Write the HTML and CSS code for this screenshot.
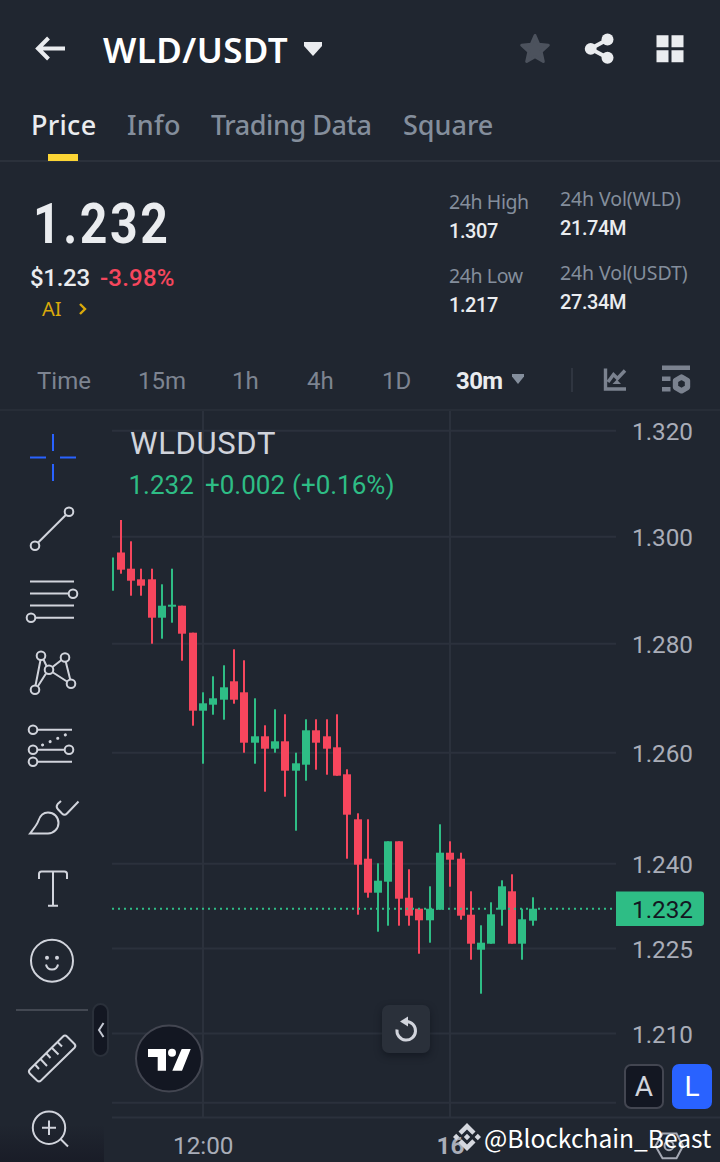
FILE: index.html
```html
<!DOCTYPE html>
<html lang="en">
<head>
  <meta charset="UTF-8">
  <meta name="viewport" content="width=device-width, initial-scale=1.0">
  <title>WLD/USDT</title>
  <link rel="stylesheet" href="styles.css">
</head>
<body>
  <header class="header">
    <svg class="back" width="32" height="26" viewBox="34 36 32 26">
      <path d="M65 48.500H38M48.500 38L38 48.500L48.500 59" fill="none" stroke="#eaecef" stroke-width="4"/>
    </svg>
    <h1 class="pair">WLD/USDT</h1>
    <svg class="caret" width="18" height="14" viewBox="0 0 18 14"><path d="M0 0H18V4L9 14L0 4Z" fill="#eaecef"/></svg>
    <div class="actions">
      <svg width="32" height="32" viewBox="519 33 32 32">
        <path d="M535 35.500L538.800 44.300L548.300 45.200L541.200 51.700L543.300 61.500L535 56.800L526.700 61.500L528.800 51.700L521.700 45.200L531.200 44.300Z" fill="#4c525d" stroke="#4c525d" stroke-width="3" stroke-linejoin="round"/>
      </svg>
      <svg width="32" height="32" viewBox="584 33 32 32">
        <path d="M607.500 39.500L590.500 48.800L607.500 57.800" fill="none" stroke="#eaecef" stroke-width="4"/>
        <circle cx="590.700" cy="48.800" r="5.900" fill="#eaecef"/>
        <circle cx="607.500" cy="39.500" r="6" fill="#eaecef"/>
        <circle cx="607.500" cy="57.800" r="6" fill="#eaecef"/>
      </svg>
      <svg width="32" height="32" viewBox="654 33 32 32">
        <path d="M656.500 35.300h12v12h-12zM671.500 35.300h12v12h-12zM656.500 50.300h12v12h-12zM671.500 50.300h12v12h-12z" fill="#eaecef"/>
      </svg>
    </div>
  </header>

  <nav class="tabs">
    <a class="tab tab-price active">Price</a>
    <a class="tab tab-info">Info</a>
    <a class="tab tab-data">Trading Data</a>
    <a class="tab tab-square">Square</a>
  </nav>

  <section class="ticker">
    <div class="quote">
      <div class="last">1.232</div>
      <div class="change"><span class="usd">$1.23</span><span class="percent">-3.98%</span></div>
      <div class="tag">
        <span>AI</span>
        <svg width="8" height="12" viewBox="0 0 8 12"><path d="M1 1L6 6L1 11" fill="none" stroke="#d9a90b" stroke-width="2.400"/></svg>
      </div>
    </div>
    <div class="stats stats-price">
      <div class="stat"><span class="label">24h High</span><span class="value">1.307</span></div>
      <div class="stat"><span class="label">24h Low</span><span class="value">1.217</span></div>
    </div>
    <div class="stats stats-volume">
      <div class="stat"><span class="label">24h Vol(WLD)</span><span class="value">21.74M</span></div>
      <div class="stat"><span class="label">24h Vol(USDT)</span><span class="value">27.34M</span></div>
    </div>
  </section>

  <div class="intervals">
    <span class="interval wide">Time</span>
    <span class="interval mid">15m</span>
    <span class="interval">1h</span>
    <span class="interval">4h</span>
    <span class="interval day-one">1D</span>
    <span class="interval selected">30m</span>
    <svg class="down" width="12" height="10" viewBox="0 0 12 10"><path d="M0 0H12V2.500L6 10L0 2.500Z" fill="#848e9c"/></svg>
    <i class="divider"></i>
    <svg class="line-icon" width="24" height="24" viewBox="603 367 24 24">
      <path d="M605.500 367.500V388H626M608 381L613.500 373.500L617.500 377.500L625 369.500" fill="none" stroke="#7b828f" stroke-width="3.400"/>
      <path d="M612.500 383H621L616.800 378.500Z" fill="#7b828f"/>
    </svg>
    <svg width="30" height="30" viewBox="661 365 30 30">
      <path d="M662 365.500h28v4.500h-28zM662 376.500h8.500v4.500H662zM662 387h8.500v4.500H662z" fill="#7b828f"/>
      <path d="M681.500 377L687.500 380.500V387.300L681.500 390.800L675.500 387.300V380.500Z" fill="none" stroke="#7b828f" stroke-width="5.400" stroke-linejoin="round"/>
    </svg>
  </div>

  <main class="workspace">
    <aside class="toolbar">
      <svg class="tool" viewBox="0 422 104 72"><path d="M53 434V451M53 464V481M30 457.500H46M60 457.500H76" stroke="#2962ff"/></svg>
      <svg class="tool" viewBox="0 494 104 72"><path d="M38.200 542.500L65.800 515"/><circle cx="35" cy="545.700" r="4.300"/><circle cx="69" cy="511.700" r="4.300"/></svg>
      <svg class="tool" viewBox="0 566 104 72"><path d="M30 581.500H74M30 593.500H68.500M30 605.500H74M35.500 617.700H74"/><circle cx="73" cy="593.700" r="4.300"/><circle cx="31" cy="617.700" r="4.300"/></svg>
      <svg class="tool" viewBox="0 638 104 72">
        <path d="M40.500 660L35.500 685.500M43.500 659.500L46.500 666M46 673.500L38 686M52.500 667L61.500 660M53 672.500L67 681.500M65.700 661.500L70.200 679.500"/>
        <circle cx="41" cy="655.700" r="4.300"/><circle cx="65" cy="657.500" r="4.300"/><circle cx="49" cy="669.700" r="4.300"/><circle cx="35" cy="689.700" r="4.300"/><circle cx="71" cy="683.700" r="4.300"/>
      </svg>
      <svg class="tool" viewBox="0 710 104 72">
        <path d="M37.500 729.700H72M37.500 749.700H64.500M37.500 761.700H72"/>
        <path d="M42.500 745L67.500 734" stroke-width="3" stroke-dasharray="0.100 8.200" stroke-linecap="round"/>
        <circle cx="33" cy="729.700" r="4.300"/><circle cx="33" cy="749.700" r="4.300"/><circle cx="69" cy="749.700" r="4.300"/><circle cx="33" cy="761.700" r="4.300"/>
      </svg>
      <svg class="tool" viewBox="0 782 104 72">
        <path d="M30 833.500H48C54 833.500 58.500 828.500 58.500 823C58.500 817 54 812.500 48 812.500C43.500 812.500 40 816 38.500 820.500C37 825 33 829.500 30 833.500Z"/>
        <path d="M61 801L57.700 804C56.500 805.500 56.500 807.500 57.700 809L62 813.500C63.500 815 65.500 815 67 813.500L78.500 801.500"/>
      </svg>
      <svg class="tool" viewBox="0 854 104 72"><path d="M39 879V874Q39 871.500 41.500 871.500H64.500Q67 871.500 67 874V879M53 872V905M48 905.700H58"/></svg>
      <svg class="tool" viewBox="0 926 104 72">
        <circle cx="52" cy="960.700" r="21"/><path d="M46 964.500Q47 969.500 52 969.500Q57 969.500 58 964.500"/>
        <circle class="dot" cx="47" cy="957.700" r="2"/><circle class="dot" cx="57" cy="957.700" r="2"/>
      </svg>
      <hr class="split">
      <svg class="tool" viewBox="0 1023 104 72">
        <path d="M63 1036.500Q65 1034.500 67 1036.500L74.500 1044Q76.200 1046 74.500 1047.800L41 1080.500Q39 1082.300 37 1080.500L29.800 1073.500Q28 1071.500 29.800 1069.500Z"/>
        <path d="M35 1064.500L39 1069M40.500 1059L47 1066M46.500 1053.500L50.500 1058M52 1048L58.500 1054.500M57.500 1042L62 1046.500"/>
      </svg>
      <svg class="tool tool-last" viewBox="0 1095 104 67"><circle cx="49" cy="1127.700" r="16.200"/><path d="M49 1120.500V1135M42 1127.700H56M60.500 1139L68 1146.500"/></svg>
      <button class="collapse"><svg width="8" height="16" viewBox="0 0 8 16"><path d="M6.500 1L2 8L6.500 15" fill="none" stroke="#c5c9d3" stroke-width="2"/></svg></button>
    </aside>

    <section class="chart">
      <svg class="plot" viewBox="104 411 616 751">
        <g class="grid">
          <path d="M112 430.700H616M112 536.700H616M112 643.700H616M112 752.700H616M112 863.700H616M112 948.600H616M112 1033.600H616M112 1102.700H616M112 1117.600H720"/>
          <path d="M203 411V1117M450 411V1117"/>
        </g>
        <g id="candles"></g>
        <path class="last-line" d="M112 908.700H616"/>
        <text class="symbol" x="130" y="454">WLDUSDT</text>
        <g class="legend">
          <text x="128.500" y="493.500">1.232</text>
          <text x="205" y="493.500">+0.002</text>
          <text x="292" y="493.500">(+0.16%)</text>
        </g>
        <g class="axis">
          <text x="632" y="440">1.320</text>
          <text x="632" y="546">1.300</text>
          <text x="632" y="653">1.280</text>
          <text x="632" y="762">1.260</text>
          <text x="632" y="873">1.240</text>
          <text x="632" y="958">1.225</text>
          <text x="632" y="1043">1.210</text>
          <text x="173" y="1154">12:00</text>
          <text class="day" x="436.500" y="1154">16</text>
        </g>
        <path d="M616 891.500H701Q704 891.500 704 894.500V923Q704 926 701 926H616Z" fill="#2ebd85"/>
        <text class="last-label" x="632" y="918">1.232</text>
        <g class="logo">
          <circle cx="169" cy="1058.500" r="33" fill="#131722" stroke="#434651" stroke-width="2"/>
          <path d="M148 1049H166V1070.700H157.700V1057H148ZM181.700 1049H190.700L182 1070.700H172.300Z" fill="#fff"/>
          <circle cx="172" cy="1052.700" r="4" fill="#fff"/>
        </g>
        <path d="M655.500 1146L662.500 1133.500H676.500L683 1146L676.500 1158.300H662.500Z" fill="none" stroke="#a5a9b4" stroke-width="2"/>
        <circle cx="669" cy="1145.700" r="4.500" fill="none" stroke="#a5a9b4" stroke-width="2"/>
      </svg>
      <button class="reset">
        <svg width="24" height="28" viewBox="394 1015 24 28">
          <path d="M397 1029.500A9.300 9.300 0 1 0 406.500 1021.500" fill="none" stroke="#d1d4dc" stroke-width="3"/>
          <path d="M408 1016.500V1026.500L400 1021.500Z" fill="#d1d4dc"/>
        </svg>
      </button>
      <div class="scales">
        <button class="scale">A</button>
        <button class="scale scale-on">L</button>
      </div>
    </section>
  </main>

  <div class="credit">
    <svg width="28" height="28" viewBox="-14 -14 28 28" fill="#d5d8df">
      <path d="M0 -14L8.500 -5.500L5.300 -2.300L0 -7.600L-5.300 -2.300L-8.500 -5.500ZM0 14L8.500 5.500L5.300 2.300L0 7.600L-5.300 2.300L-8.500 5.500ZM0 -3.200L3.200 0L0 3.200L-3.200 0ZM-10.800 -3.200L-7.600 0L-10.800 3.200L-14 0ZM10.800 -3.200L14 0L10.800 3.200L7.600 0Z"/>
    </svg>
    <span>@Blockchain_Beast</span>
  </div>
  <script src="script.js"></script>
</body>
</html>
```
FILE: styles.css
```css
*{
  box-sizing: border-box;
}
body{
  margin: 0;
  width: 720px;
  height: 1162px;
  position: relative;
  overflow: hidden;
  background: #202630;
  color: #eaecef;
  font-family: Roboto, sans-serif;
}
svg{
  display: block;
  flex: none;
}
button{
  border: 0;
  padding: 0;
  font-family: inherit;
}

.header{
  display: flex;
  align-items: center;
  height: 98px;
  padding: 0 34px;
}
.pair{
  width: 186px;
  margin: 2px 15px 0 37px;
  font: 600 35px/50px "Noto Sans", sans-serif;
  letter-spacing: 0.4px;
  color: #fff;
  white-space: nowrap;
}
.caret{
  margin-top: -1px;
}
.actions{
  display: flex;
  margin-left: auto;
}
.actions svg + svg{
  margin-left: 33px;
}
.actions svg + svg + svg{
  margin-left: 38px;
}

.tabs{
  display: flex;
  height: 64px;
  padding-left: 31px;
  border-bottom: 2px solid #2b313b;
}
.tab{
  position: relative;
  font: 500 27px/54px "Noto Sans", sans-serif;
  color: #848e9c;
  white-space: nowrap;
}
.tab-price{
  width: 96px;
  letter-spacing: 0.3px;
}
.tab-info{
  width: 84px;
  letter-spacing: 0.3px;
}
.tab-data{
  width: 192px;
  letter-spacing: -0.45px;
}
.active{
  color: #eaecef;
}
.active::after{
  content: "";
  position: absolute;
  left: 17px;
  bottom: -1px;
  width: 30px;
  height: 7px;
  background: #fcd535;
}

.ticker{
  display: flex;
  height: 189px;
}
.quote{
  width: 449px;
  padding: 32px 0 0 31px;
}
.last{
  margin-left: 2px;
  font-size: 56px;
  line-height: 61px;
  font-weight: 700;
  letter-spacing: 3px;
  transform: scaleX(0.86);
  transform-origin: left;
}
.change{
  display: flex;
  margin-top: 9px;
  font-size: 24px;
  line-height: 28px;
  font-weight: 500;
}
.usd{
  width: 70px;
  margin-left: -1px;
  letter-spacing: -0.3px;
}
.percent{
  letter-spacing: 0.2px;
  color: #f6465d;
}
.tag{
  display: flex;
  align-items: center;
  gap: 17px;
  margin: 3px 0 0 11px;
  font: 400 20px/28px "Noto Sans", sans-serif;
  color: #d9a90b;
}
.stats{
  width: 111px;
  padding-top: 24px;
}
.stats-volume{
  width: 160px;
  padding-top: 21px;
}
.stat{
  display: flex;
  flex-direction: column;
  margin-bottom: 14px;
  line-height: 30px;
  white-space: nowrap;
}
.label{
  height: 30px;
  font: 400 19.5px/32px "Noto Sans", sans-serif;
  letter-spacing: -0.1px;
  color: #848e9c;
}
.stats-price .label{
  letter-spacing: -0.4px;
}
.value{
  font-size: 20px;
  font-weight: 500;
  letter-spacing: -0.4px;
}

.intervals{
  display: flex;
  align-items: center;
  height: 60px;
  padding-left: 37px;
  border-bottom: 2px solid #272d37;
}
.interval{
  width: 75px;
  font-size: 24px;
  line-height: 30px;
  padding-top: 1px;
  color: #7d8491;
}
.wide{
  width: 101px;
}
.mid{
  width: 94px;
}
.day-one{
  width: 74px;
}
.selected{
  width: 56px;
  color: #eaecef;
  font-weight: 700;
  letter-spacing: -0.6px;
}
.divider{
  width: 2px;
  height: 24px;
  margin: 0 30px 0 47px;
  background: #2f3540;
}
.down{
  margin-top: -2px;
}
.line-icon{
  margin-right: 34px;
}

.workspace{
  display: flex;
  height: 751px;
}
.toolbar{
  position: relative;
  width: 104px;
  padding-top: 11px;
  background: linear-gradient(#202630 95%, #191c27);
}
.tool{
  width: 104px;
  height: 72px;
  fill: none;
  stroke: #d1d4dc;
  stroke-width: 2;
}
.tool-last{
  height: 67px;
}
.dot{
  fill: #d1d4dc;
  stroke: none;
}
.split{
  width: 72px;
  height: 2px;
  margin: 11px 16px 12px;
  border: 0;
  background: #434852;
}
.collapse{
  position: absolute;
  left: 92px;
  top: 592px;
  width: 17px;
  height: 54px;
  padding-left: 4px;
  border: 2px solid #2a303a;
  border-radius: 9px;
  background: #131722;
}
.collapse svg{
  margin-left: -1px;
}

.chart{
  position: relative;
  width: 616px;
}
.plot{
  width: 616px;
  height: 751px;
}
.grid{
  fill: none;
  stroke: #2b313c;
  stroke-width: 2;
}
.up{
  fill: #2ebd85;
}
.fall{
  fill: #f6465d;
}
.last-line{
  stroke: #2ebd85;
  stroke-width: 2;
  stroke-dasharray: 2 4;
}
.symbol{
  font-size: 31px;
  letter-spacing: 0.65px;
  fill: #d1d4dc;
}
.legend{
  font-size: 26px;
  fill: #2ebd85;
}
.axis{
  font-size: 24.3px;
  fill: #a9adb8;
}
.day{
  font-weight: 700;
}
.last-label{
  font-size: 24.3px;
  fill: #131722;
}
.reset{
  position: absolute;
  left: 278px;
  top: 594px;
  width: 48px;
  height: 48px;
  padding-left: 12px;
  border-radius: 7px;
  background: #2a303a;
  box-shadow: 0 3px 7px rgba(10, 13, 22, 0.5);
}
.scales{
  position: absolute;
  right: 8px;
  top: 653px;
  display: flex;
  gap: 8px;
}
.scale{
  width: 40px;
  height: 45px;
  border: 2px solid #434651;
  border-radius: 7px;
  background: #131722;
  color: #d1d4dc;
  font-size: 28px;
  line-height: 40px;
}
.scale-on{
  border-color: #2962ff;
  background: #2962ff;
  color: #fff;
}

.credit{
  position: absolute;
  left: 453px;
  top: 1119px;
  display: flex;
  align-items: center;
  gap: 3px;
  height: 36px;
  font: 400 24.6px/36px "Noto Sans CJK SC", sans-serif;
  color: #fff;
}
```
FILE: script.js
```js
// x, high, body top, body bottom, low, direction
const candles = [
  [113, 557.5, 557.5, 557.5, 590.7, 1],
  [121, 520, 552.5, 569.7, 573.7, 0],
  [131, 541.3, 568.7, 580.7, 595.7, 0],
  [141, 568.7, 579.3, 585.7, 595.7, 0],
  [152, 568.7, 579.3, 617.7, 643.7, 0],
  [162, 584.3, 605.7, 617.7, 638.7, 1],
  [172, 568.7, 604.7, 606.7, 622.7, 1],
  [182, 605.7, 605.7, 633.7, 660.7, 0],
  [193, 632.7, 632.7, 710.7, 725.7, 0],
  [203, 692.3, 703.3, 710.7, 763.7, 1],
  [213, 676.3, 698.3, 704.7, 714.7, 1],
  [224, 665.3, 687.3, 699.7, 719.7, 1],
  [234, 649.3, 681.3, 699.7, 703.7, 0],
  [244, 660.3, 692.3, 742.7, 752.7, 0],
  [255, 698.3, 736.3, 742.7, 763.7, 1],
  [265, 725.3, 736.3, 748.7, 791.7, 0],
  [275, 709.3, 741.3, 748.7, 752.7, 1],
  [285, 714.3, 741.3, 770.7, 796.7, 0],
  [296, 752.7, 763.3, 770.7, 830.7, 1],
  [306, 719.3, 730.3, 764.7, 780.7, 1],
  [316, 719.3, 730.3, 742.7, 769.7, 0],
  [327, 719.3, 736.3, 748.7, 774.7, 0],
  [337, 714.3, 747.3, 775.7, 775.7, 0],
  [347, 769.3, 774.3, 814.7, 858.7, 0],
  [358, 813.3, 819.3, 864.7, 914.7, 0],
  [368, 819.3, 858.7, 892.7, 897.7, 0],
  [378, 863.3, 880.7, 892.7, 931.7, 1],
  [388, 841.3, 841.3, 881.7, 925.7, 1],
  [399, 841.3, 841.3, 898.7, 925.7, 0],
  [409, 869.3, 897.7, 915.7, 925.7, 0],
  [419, 908.7, 908.7, 920.3, 953.7, 0],
  [430, 886.3, 908.7, 920.3, 942.7, 1],
  [440, 824.3, 852.7, 909.7, 909.7, 1],
  [450, 841.3, 852.7, 859.7, 886.7, 0],
  [461, 852.7, 858.7, 915.7, 919.7, 0],
  [471, 891.3, 914.7, 943.7, 959.7, 0],
  [481, 925.3, 942.7, 949.7, 993.7, 1],
  [491, 902.3, 914.3, 943.7, 943.7, 1],
  [502, 880.3, 886.3, 909.7, 925.7, 1],
  [512, 874.3, 891.3, 943.7, 943.7, 0],
  [522, 908.7, 919.3, 943.7, 959.7, 1],
  [533, 897.3, 908.7, 920.7, 925.7, 1]
];

let str = "";
for (const [x, high, top, bottom, low, up] of candles) {
  const name = up ? "up" : "fall";
  str += `<rect class="${name}" x="${x - 1}" y="${high}" width="2" height="${low - high}"/>`;
  if (bottom > top) {
    str += `<rect class="${name}" x="${x - 4}" y="${top}" width="8" height="${bottom - top}"/>`;
  }
}
document.getElementById("candles").innerHTML = str;
```
